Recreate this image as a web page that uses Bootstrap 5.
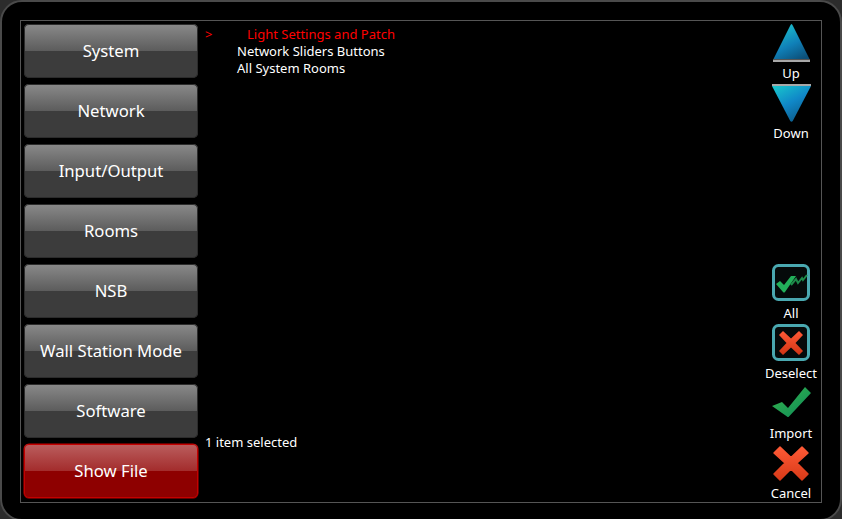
<!DOCTYPE html>
<html lang="en">
<head>
<meta charset="utf-8">
<title>Import</title>
<link rel="stylesheet" href="https://cdn.jsdelivr.net/npm/bootstrap@5.3.0/dist/css/bootstrap.min.css">
<style>
html,body{height:519px;overflow:hidden}
body{background:#2c2c2c;color:#fff;font-family:"Noto Sans","DejaVu Sans",sans-serif;font-size:13px;line-height:17px}
.shell{width:842px;height:521px;background:#000;border:2px solid #4a4a4a;border-radius:22px;padding:18px}
.stage{height:483px;border:1px solid #555;padding:3px 0 4px 3px}
.side{width:174px;gap:6px}
.sidebtn{height:54px;border-radius:5px;border:0;color:#fff;font-size:16.7px;padding:0;background:linear-gradient(#8a8a8a 0,#5c5c5c 50%,#3c3c3c 50%,#3c3c3c 100%);box-shadow:inset 0 0 0 1px #2c2c2c}
.sidebtn.hot{background:linear-gradient(#bb5f5f 0,#a32c2c 50%,#8e0000 50%,#8e0000 100%);box-shadow:0 0 0 .5px #c40000,inset 0 0 0 1px #c40000}
.mid{padding:1px 0 0 7px}
.filelist{padding-top:1px}
.row-hot{color:#f00}
.row-hot .mk{width:42px}
.row-plain{padding-left:32px}
.status{margin-bottom:47px}
.tools{width:60px;gap:6px}
.tool{width:60px;height:54px;text-align:center;white-space:nowrap}
.tool svg{display:block;margin:0 auto 1px}
</style>
</head>
<body>
<div class="shell">
<div class="stage d-flex">
  <div class="side d-flex flex-column flex-shrink-0">
    <button class="btn sidebtn">System</button>
    <button class="btn sidebtn">Network</button>
    <button class="btn sidebtn">Input/Output</button>
    <button class="btn sidebtn">Rooms</button>
    <button class="btn sidebtn">NSB</button>
    <button class="btn sidebtn">Wall Station Mode</button>
    <button class="btn sidebtn">Software</button>
    <button class="btn sidebtn hot">Show File</button>
  </div>
  <div class="mid flex-grow-1 d-flex flex-column justify-content-between">
    <div class="filelist">
      <div class="row-hot d-flex"><span class="mk">&gt;</span><span>Light Settings and Patch</span></div>
      <div class="row-plain">Network Sliders Buttons</div>
      <div class="row-plain">All System Rooms</div>
    </div>
    <div class="status">1 item selected</div>
  </div>
  <div class="tools d-flex flex-column flex-shrink-0">
    <div class="tool">
      <svg width="40" height="40" viewBox="0 0 40 40"><defs><linearGradient id="gu" x1="0.3" y1="0" x2="0.8" y2="1"><stop offset="0" stop-color="#1cc0cc"/><stop offset=".55" stop-color="#1080b8"/><stop offset="1" stop-color="#0c4f78"/></linearGradient></defs><path d="M20.500 0 Q21 0 22 2 L38.500 35 L2.500 35 L19 2 Q20 0 20.500 0Z" fill="url(#gu)"/><rect x="2" y="35.500" width="37" height="2.500" fill="#a8a8a8"/></svg>
      <div>Up</div>
    </div>
    <div class="tool">
      <svg width="40" height="40" viewBox="0 0 40 40"><defs><linearGradient id="gd" x1="0.1" y1="0" x2="0.7" y2="1"><stop offset="0" stop-color="#18c4cc"/><stop offset=".5" stop-color="#1088c8"/><stop offset="1" stop-color="#0c5a88"/></linearGradient></defs><rect x="1" y="0" width="39" height="2" fill="#a8a8a8"/><path d="M1 2 L40 2 L22 36.500 Q20.500 39 19 36.500Z" fill="url(#gd)"/></svg>
      <div>Down</div>
    </div>
    <div class="flex-grow-1"></div>
    <div class="tool">
      <svg width="40" height="40" viewBox="0 0 40 40"><rect x="2.500" y="1.500" width="35" height="34" rx="5" fill="#050a0a" stroke="#4aa8b0" stroke-width="3"/><path d="M5 20 L9 17 L13 21 L20 12 L25 12 L14 28 Q13 29 12 28Z" fill="#22b05a"/><path d="M20 21 L25 15 L27 19 L31 14 L32 16 L36 11" fill="none" stroke="#1d8a4a" stroke-width="2"/></svg>
      <div>All</div>
    </div>
    <div class="tool">
      <svg width="40" height="40" viewBox="0 0 40 40"><defs><linearGradient id="gy" x1="0" y1="0" x2="0" y2="1"><stop offset="0" stop-color="#ff5a36"/><stop offset="1" stop-color="#d03414"/></linearGradient></defs><rect x="2.500" y="1.500" width="35" height="34" rx="5" fill="#050a0a" stroke="#4aa8b0" stroke-width="3"/><path d="M8 11 L12 7 L20 14.500 L28 7 L32 11 L24.500 19 L32 27 L28 31 L20 23.500 L12 31 L8 27 L15.500 19Z" fill="url(#gy)"/></svg>
      <div>Deselect</div>
    </div>
    <div class="tool">
      <svg width="40" height="40" viewBox="0 0 40 40"><defs><linearGradient id="gc" x1="0" y1="0" x2="1" y2="1"><stop offset="0" stop-color="#39b54a"/><stop offset="1" stop-color="#0b8a5a"/></linearGradient></defs><path d="M1 22 L11 18 L17 24 L34 3 L40 9 L18 32.500 Q17 33.500 16 32.500Z" fill="url(#gc)"/></svg>
      <div>Import</div>
    </div>
    <div class="tool">
      <svg width="40" height="40" viewBox="0 0 40 40"><defs><linearGradient id="gx" x1="0" y1="0" x2="0" y2="1"><stop offset="0" stop-color="#ff5a36"/><stop offset="1" stop-color="#d83a18"/></linearGradient></defs><path d="M3 9 L9 3 L20 13.500 L31 3 L37 9 L26 19 L37 30 L31 36 L20 25 L9 36 L3 30 L14 19Z" fill="url(#gx)" stroke="url(#gx)" stroke-width="1.500" stroke-linejoin="round"/></svg>
      <div>Cancel</div>
    </div>
  </div>
</div>
</div>
<script src="https://cdn.jsdelivr.net/npm/bootstrap@5.3.0/dist/js/bootstrap.bundle.min.js"></script>
</body>
</html>
